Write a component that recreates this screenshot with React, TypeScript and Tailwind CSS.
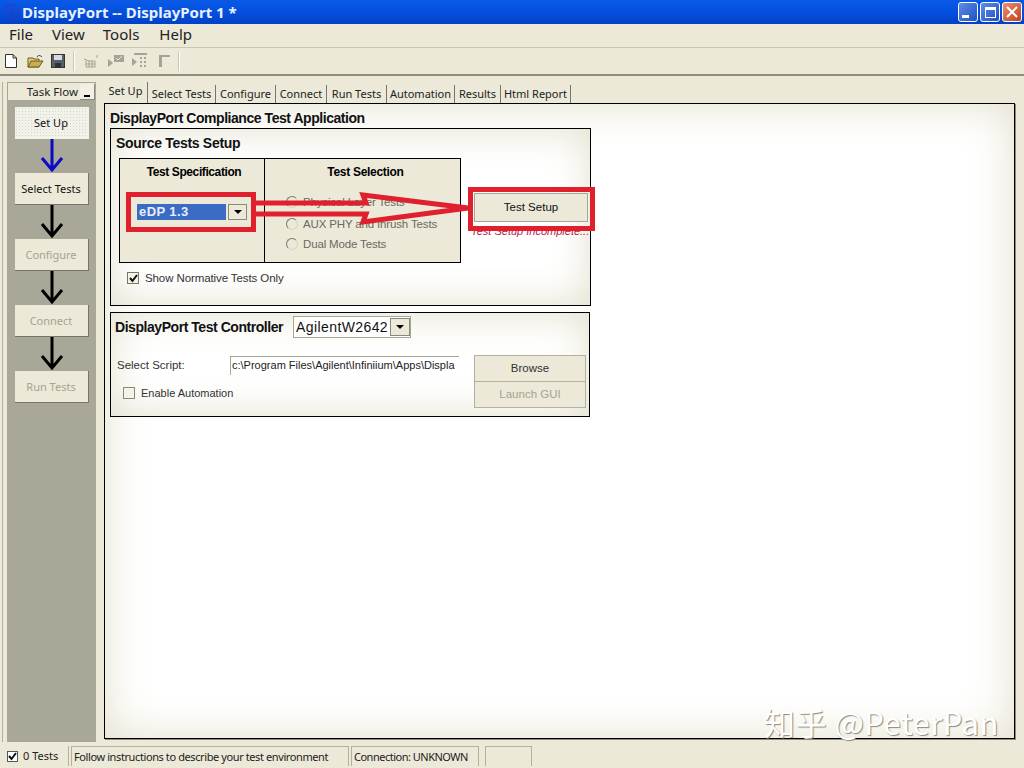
import type { ReactNode } from 'react';

const sans = 'font-["Noto_Sans",sans-serif]';
const arial = 'font-["Liberation_Sans",sans-serif]';

const steps = [
  { label: 'Set Up', state: 'active' },
  { label: 'Select Tests', state: 'enabled' },
  { label: 'Configure', state: 'disabled' },
  { label: 'Connect', state: 'disabled' },
  { label: 'Run Tests', state: 'disabled' },
];

const tabs = [
  { label: 'Select Tests', width: 'w-[68px]' },
  { label: 'Configure', width: 'w-[60px]' },
  { label: 'Connect', width: 'w-[51px]' },
  { label: 'Run Tests', width: 'w-[60px]' },
  { label: 'Automation', width: 'w-[68px]' },
  { label: 'Results', width: 'w-[46px]' },
  { label: 'Html Report', width: 'w-[70px]' },
];

function FlowArrow({ color }: { color: string }) {
  return (
    <svg width="24" height="34" viewBox="0 0 24 34" fill="none" stroke={color} strokeWidth="3" className="block">
      <path d="M12 0V31M2 19L12 31L22 19" />
    </svg>
  );
}

function TitleButton({ children, red }: { children: ReactNode; red?: boolean }) {
  return (
    <div
      className={`flex h-[20px] w-[20px] items-center justify-center rounded-[3px] border border-white ${
        red ? 'bg-gradient-to-br from-[#e9906f] to-[#c0401c]' : 'bg-gradient-to-br from-[#5f8de8] to-[#1f4fc0]'
      }`}
    >
      {children}
    </div>
  );
}

function ToolbarIcons() {
  return (
    <div className="flex h-[26px] items-center pl-[4px]">
      <svg width="14" height="16" viewBox="0 0 14 16" className="mr-[9px]">
        <path d="M1.5 1.5H9L12.5 5V14.5H1.5Z" fill="#fff" stroke="#333" />
        <path d="M9 1.5V5H12.5" fill="none" stroke="#333" />
      </svg>
      <svg width="17" height="15" viewBox="0 0 17 15" className="mr-[7px]">
        <path d="M1 13V4H6L7 5H12V13Z" fill="#e6cf7c" stroke="#6b5a20" />
        <path d="M1 13L4 7H16L12 13Z" fill="#c8ad52" stroke="#6b5a20" />
        <path d="M10 3C11 1 13 1 15 3" fill="none" stroke="#333" />
      </svg>
      <svg width="14" height="14" viewBox="0 0 14 14" className="mr-[8px]">
        <rect x="0.5" y="0.5" width="13" height="13" fill="#55606a" stroke="#333" />
        <rect x="3" y="1" width="8" height="5" fill="#d8dce0" />
        <rect x="4" y="9" width="6" height="4" fill="#2c3238" />
      </svg>
      <div className="mr-[8px] h-[20px] w-[2px] border-x border-x-[#c9c6b4] border-r-white" />
      <svg width="16" height="14" viewBox="0 0 16 14" fill="none" stroke="#a5a393" className="mr-[8px]">
        <path d="M1 5L6 7H12V13H3V7M3 10H12M6 7V13M9 7V13M14 1V4" />
      </svg>
      <svg width="18" height="14" viewBox="0 0 18 14" className="mr-[6px]">
        <path d="M1 5L6 9L1 13Z" fill="#a5a393" />
        <rect x="7" y="1" width="10" height="7" fill="#a5a393" />
        <path d="M9 4L11 6L15 2" fill="none" stroke="#ece9d8" />
      </svg>
      <svg width="18" height="16" viewBox="0 0 18 16" className="mr-[9px]">
        <rect x="3" y="0" width="13" height="2" fill="#a5a393" />
        <path d="M1 5L6 9L1 13Z" fill="#a5a393" />
        <path d="M9 4H11V6H9ZM13 4H15V6H13ZM9 8H11V10H9ZM13 8H15V10H13ZM9 12H11V14H9ZM13 12H15V14H13Z" fill="#a5a393" />
      </svg>
      <svg width="13" height="14" viewBox="0 0 13 14" className="mr-[7px]">
        <path d="M1 1H4V13H1ZM4 1H12V3H4Z" fill="#a5a393" />
      </svg>
      <div className="h-[20px] w-[2px] border-x border-x-[#c9c6b4] border-r-white" />
    </div>
  );
}

function Radio({ label, top }: { label: string; top: string }) {
  return (
    <div className={`flex items-center ${top}`}>
      <span className="mr-[5px] h-[12px] w-[12px] rounded-full border border-[#d8d5c4] border-t-[#77756a] border-l-[#77756a] bg-[#ece9d8]" />
      <span className={`${arial} text-[11.5px] leading-[14px] tracking-[-0.15px] text-[#6a6a62]`}>{label}</span>
    </div>
  );
}

function CheckMark() {
  return (
    <svg width="9" height="9" viewBox="0 0 9 9" fill="none" stroke="#111" strokeWidth="2">
      <path d="M1 4L3.5 7L8 1" />
    </svg>
  );
}

function DropButton({ className }: { className: string }) {
  return (
    <div className={`flex items-center justify-center border border-[#8b897b] bg-[#ece9d8] ${className}`}>
      <div className="h-0 w-0 border-x-[4px] border-t-[4px] border-x-transparent border-t-black" />
    </div>
  );
}

function SourceSetup() {
  return (
    <section className="relative h-[178px] w-[481px] border border-black bg-white shadow-[inset_0_0_40px_#e2dfcb]">
      <h2 className={`${arial} pl-[5px] pt-[6px] text-[14px] font-bold leading-[16px] tracking-[-0.3px] text-[#111]`}>
        Source Tests Setup
      </h2>
      <div className="ml-[8px] mt-[7px] flex items-start">
        <div className="flex h-[105px] w-[342px] border border-black bg-[#ece9d8]">
          <div className="w-[145px] border-r border-black">
            <div className={`${arial} pl-[4px] pt-[6px] text-center text-[12px] font-bold leading-[15px] tracking-[-0.4px]`}>
              Test Specification
            </div>
            <div className="ml-[17px] mt-[23px] flex h-[17px] w-[110px] items-center justify-between">
              <span className={`${arial} flex h-[16px] w-[89px] items-center bg-[#3a6cc4] pl-[2px] text-[13px] font-bold leading-[14px] tracking-[0.4px] text-[#e8eefc]`}>
                eDP 1.3
              </span>
              <DropButton className="h-[16px] w-[19px]" />
            </div>
          </div>
          <div className="flex-1">
            <div className={`${arial} pl-[6px] pt-[6px] text-center text-[12px] font-bold leading-[15px] tracking-[-0.3px]`}>
              Test Selection
            </div>
            <Radio label="Physical Layer Tests" top="ml-[21px] mt-[15px]" />
            <Radio label="AUX PHY and Inrush Tests" top="ml-[21px] mt-[8px]" />
            <Radio label="Dual Mode Tests" top="ml-[21px] mt-[6px]" />
          </div>
        </div>
        <div className="ml-[13px] mt-[35px] w-[114px]">
          <div className={`${arial} flex h-[29px] items-center justify-center border border-[#a8a594] bg-[#ece9d8] text-[11.5px] text-[#111]`}>
            Test Setup
          </div>
          <div className={`${arial} -ml-[3px] mt-[3px] whitespace-nowrap text-[11px] italic leading-[13px] text-[#b52545]`}>
            Test Setup Incomplete...
          </div>
        </div>
      </div>
      <div className="ml-[16px] mt-[8px] flex items-center">
        <span className="mr-[6px] flex h-[12px] w-[12px] items-center justify-center border border-[#77756a] bg-[#f5f3e8]">
          <CheckMark />
        </span>
        <span className={`${arial} text-[11.5px] leading-[14px] tracking-[-0.1px] text-[#333]`}>Show Normative Tests Only</span>
      </div>
    </section>
  );
}

function TestController() {
  return (
    <section className="mt-[6px] h-[105px] w-[480px] border border-black bg-white pl-[4px] pr-[3px] shadow-[inset_0_0_40px_#e2dfcb]">
      <div className="mt-[3px] flex items-center">
        <span className={`${arial} text-[14px] font-bold leading-[16px] tracking-[-0.45px] text-[#111]`}>
          DisplayPort Test Controller
        </span>
        <div className="ml-[10px] flex h-[22px] w-[118px] items-center justify-between border border-[#a8a594] bg-white pl-[2px]">
          <span className={`${arial} text-[14px] leading-[16px] tracking-[0.4px] text-[#111]`}>AgilentW2642</span>
          <DropButton className="h-[18px] w-[20px]" />
        </div>
      </div>
      <div className="mt-[17px] flex">
        <div className="w-[359px]">
          <div className="flex items-center pt-[1px]">
            <span className={`${arial} w-[115px] pl-[2px] text-[11.5px] text-[#333]`}>Select Script:</span>
            <div className={`${arial} h-[19px] w-[229px] overflow-hidden whitespace-nowrap border-l border-t border-[#a8a594] bg-white pl-[1px] text-[11px] leading-[17px] text-[#222]`}>
              c:\Program Files\Agilent\Infiniium\Apps\Displa
            </div>
          </div>
          <div className="ml-[8px] mt-[11px] flex items-center">
            <span className="mr-[6px] h-[12px] w-[12px] border border-[#8b897b] bg-[#f5f3e8]" />
            <span className={`${arial} text-[11px] leading-[14px] text-[#333]`}>Enable Automation</span>
          </div>
        </div>
        <div className="w-[112px]">
          <div className={`${arial} flex h-[27px] items-center justify-center border border-[#b3b09e] bg-[#ece9d8] text-[11.5px] text-[#333]`}>
            Browse
          </div>
          <div className={`${arial} flex h-[26px] items-center justify-center border border-t-0 border-[#b3b09e] bg-[#ece9d8] text-[11.5px] text-[#a5a393]`}>
            Launch GUI
          </div>
        </div>
      </div>
    </section>
  );
}

export default function App() {
  return (
    <div className={`${sans} relative flex h-[768px] w-[1024px] flex-col overflow-hidden bg-[#ece9d8] text-black`}>
      <header className="flex h-[24px] items-center justify-between bg-gradient-to-b from-[#0a5ae6] via-[#0450e0] to-[#0340c4] pr-[2px]">
        <div className="flex items-center">
          <svg width="20" height="20" viewBox="0 0 20 20" className="ml-[2px]">
            <circle cx="10" cy="10" r="7" fill="none" stroke="#2a3fc0" strokeWidth="3" strokeDasharray="1.5 1.5" />
            <circle cx="10" cy="10" r="2.5" fill="#2a3fc0" />
          </svg>
          <span className="text-[15px] font-bold leading-[20px] text-[#e8f0ff]">DisplayPort -- DisplayPort 1 *</span>
        </div>
        <div className="flex gap-[2px]">
          <TitleButton>
            <div className="mt-[8px] mr-[5px] h-[3px] w-[7px] bg-white" />
          </TitleButton>
          <TitleButton>
            <div className="h-[11px] w-[11px] border border-t-[3px] border-white" />
          </TitleButton>
          <TitleButton red>
            <svg width="12" height="12" viewBox="0 0 12 12" stroke="#fff" strokeWidth="2">
              <path d="M1 1L11 11M11 1L1 11" />
            </svg>
          </TitleButton>
        </div>
      </header>

      <nav className="flex h-[24px] items-center border-b border-b-[#c9c6b4] pb-[3px] pl-[9px] text-[15px] leading-[20px] text-[#222]">
        <span className="mr-[19px]">File</span>
        <span className="mr-[18px]">View</span>
        <span className="mr-[20px]">Tools</span>
        <span>Help</span>
      </nav>

      <ToolbarIcons />

      <main className="flex h-[670px] border-t-2 border-t-[#8f8c7c] pl-[2px] pt-[6px]">
        <aside className="flex h-[660px] w-[95px] flex-col border-l border-[#b3b09e] pl-[4px]">
          <div className="flex h-[18px] w-[89px] items-center justify-end border border-[#a8a594] border-b-0 bg-[#ece9d8]">
            <span className="mr-[2px] text-[11.5px] leading-[14px] text-[#222]">Task Flow</span>
            <span className="flex h-[16px] w-[15px] items-end justify-center border-b border-r border-[#8b897b] bg-[#f2f0e4] pb-[2px]">
              <span className="h-[2px] w-[6px] bg-black" />
            </span>
          </div>
          <div className="flex w-[89px] flex-1 flex-col items-center bg-[#a9a797] pt-[7px]">
            {steps.map((step, i) => (
              <div key={step.label} className="flex flex-col items-center">
                <div
                  className={`flex h-[32px] w-[74px] items-center justify-center border-b border-r text-[11px] leading-[14px] ${
                    step.state === 'active'
                      ? 'border-[#f5f3e8] bg-[#f3f2ea] bg-[radial-gradient(#d8d6cc_1px,transparent_1px)] bg-[length:3px_3px] text-[#111]'
                      : step.state === 'enabled'
                        ? 'border-[#77756a] bg-[#ece9d8] text-[#111]'
                        : 'border-[#77756a] bg-[#ece9d8] text-[#a5a393]'
                  }`}
                >
                  {step.label}
                </div>
                {i < steps.length - 1 && <FlowArrow color={i === 0 ? '#0a0ac8' : '#000'} />}
              </div>
            ))}
          </div>
        </aside>

        <div className="ml-[7px] flex flex-col">
          <div className="flex h-[21px] items-end text-[11px] leading-[14px] text-[#222]">
            <div className="flex h-[21px] w-[44px] items-center justify-center border-r border-r-[#77756a] pb-[3px]">Set Up</div>
            {tabs.map((tab) => (
              <div key={tab.label} className={`flex h-[18px] items-center justify-center border-r border-r-[#77756a] ${tab.width}`}>
                {tab.label}
              </div>
            ))}
          </div>
          <div className="h-[636px] w-[911px] border border-black bg-white px-[5px] shadow-[inset_0_0_46px_#e2dfcb,1px_1px_0_#8f8c7c]">
            <h1 className={`${arial} pt-[6px] text-[14px] font-bold leading-[16px] tracking-[-0.45px] text-[#111]`}>
              DisplayPort Compliance Test Application
            </h1>
            <div className="mt-[2px]">
              <SourceSetup />
              <TestController />
            </div>
          </div>
        </div>
      </main>

      <footer className="flex h-[22px] items-center gap-[2px] pl-[1px] pt-[2px] text-[11px] leading-[14px] text-[#222]">
        <div className="flex h-[20px] w-[68px] items-center whitespace-nowrap border-r border-[#b3b09e] pl-[6px]">
          <span className="mr-[5px] flex h-[11px] w-[11px] items-center justify-center border border-[#555] bg-white">
            <CheckMark />
          </span>
          0 Tests
        </div>
        <div className="flex h-[20px] w-[278px] items-center whitespace-nowrap border-l border-t border-r border-[#b3b09e] pl-[2px] tracking-[-0.4px]">
          Follow instructions to describe your test environment
        </div>
        <div className="flex h-[20px] w-[128px] items-center whitespace-nowrap border-l border-t border-r border-[#b3b09e] pl-[2px] tracking-[-0.5px]">
          Connection: UNKNOWN
        </div>
        <div className="ml-[4px] h-[20px] w-[47px] border-l border-t border-r border-[#b3b09e]" />
      </footer>

      <svg width="480" height="50" viewBox="0 0 480 50" fill="none" className="absolute left-[120px] top-[185px]">
        <rect x="8.5" y="9.5" width="125" height="35" stroke="#e0202c" strokeWidth="5" />
        <rect x="350.5" y="4.5" width="122" height="39" stroke="#e0202c" strokeWidth="5" />
        <path d="M134 18H246L243 10L348 23L243 37L246 29H134" stroke="#e0202c" strokeWidth="5" />
      </svg>

      <div className='absolute left-[764px] top-[701px] whitespace-nowrap font-["Noto_Sans_CJK_SC",sans-serif] text-[31px] leading-[42px] tracking-[0.5px] text-white [text-shadow:1px_1px_1px_#8a8a80]'>
        知乎 @PeterPan
      </div>
    </div>
  );
}
